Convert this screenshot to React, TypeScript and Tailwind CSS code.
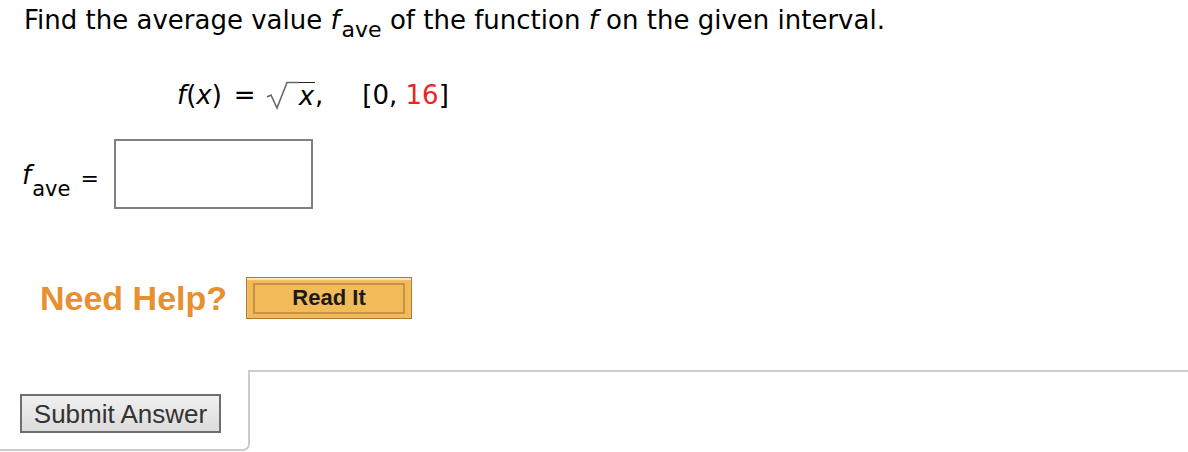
export default function App() {
  const verdana = { fontFamily: '"DejaVu Sans", Verdana, sans-serif' };
  const arial = { fontFamily: '"Liberation Sans", Arial, sans-serif' };
  return (
    <div className="w-[1188px] h-[452px] bg-white overflow-hidden text-black" style={verdana}>
      <div className="pl-[24px] pt-[5px] h-[35px] text-[26px] leading-[30px] whitespace-nowrap">
        Find the average value <i>f</i>
        <span className="text-[22px] relative top-[8px] ml-[2px]">ave</span> of the function <i>f</i> on the given interval.
      </div>

      <div className="pl-[177px] mt-[45px] h-[30px] text-[26px] leading-[30px] flex items-center whitespace-nowrap">
        <span><i>f</i>(<i>x</i>)</span>
        <span className="ml-[12px]">=</span>
        <span className="inline-flex items-start ml-[10px] relative top-[1px]">
          <svg width="33" height="30" viewBox="0 0 33 30">
            <path d="M1 16 L5 14 L11 27 L21 1.5 L33 1.5" fill="none" stroke="#666" strokeWidth="1.6" strokeLinejoin="miter" />
          </svg>
          <span className="border-t-[1.6px] border-[#222] leading-[26px] mt-[1px] pr-[1px]"><i>x</i></span>
        </span>
        <span>,</span>
        <span className="ml-[39px]">[0, <span className="text-[#e8251f]">16</span>]</span>
      </div>

      <div className="flex items-center pl-[22px] mt-[29px] h-[70px]">
        <span className="text-[26px] leading-[30px] relative top-[2px] whitespace-nowrap">
          <i>f</i><span className="text-[21px] relative top-[12px] ml-[1px]">ave</span>
        </span>
        <span className="ml-[10px] text-[22px] relative top-[4px]">=</span>
        <div className="ml-[15px] w-[199px] h-[70px] border-2 border-[#808080] bg-white" />
      </div>

      <div className="flex items-center pl-[40px] mt-[68px] h-[41px]" style={arial}>
        <span className="text-[34px] font-bold text-[#e8902f] leading-none">Need Help?</span>
        <button className="ml-[19px] w-[166px] h-[42px] border-[1.5px] border-[#b07838] bg-[#f3ba58] px-[6px] pt-[5px] pb-[4px] shadow-[inset_0_2px_1px_#fde6b8]">
          <div className="h-full border-2 border-[#c8914a] flex items-center justify-center text-[22px] font-bold text-[#1a1a1a] leading-none" style={arial}>
            Read It
          </div>
        </button>
      </div>

      <div className="flex mt-[52px] h-[82px]">
        <div className="w-[250px] h-[81px] border-r-2 border-b-2 border-[#cccccc] rounded-br-[7px] pl-[20px] pt-[24px]">
          <button
            className="w-[201px] h-[39px] border-2 border-[#6e6e6e] bg-gradient-to-b from-[#f0f0f0] to-[#dcdcdc] text-[26px] text-[#333] leading-none"
            style={arial}
          >
            Submit Answer
          </button>
        </div>
        <div className="flex-1 border-t-2 border-[#cccccc]" />
      </div>
    </div>
  );
}
